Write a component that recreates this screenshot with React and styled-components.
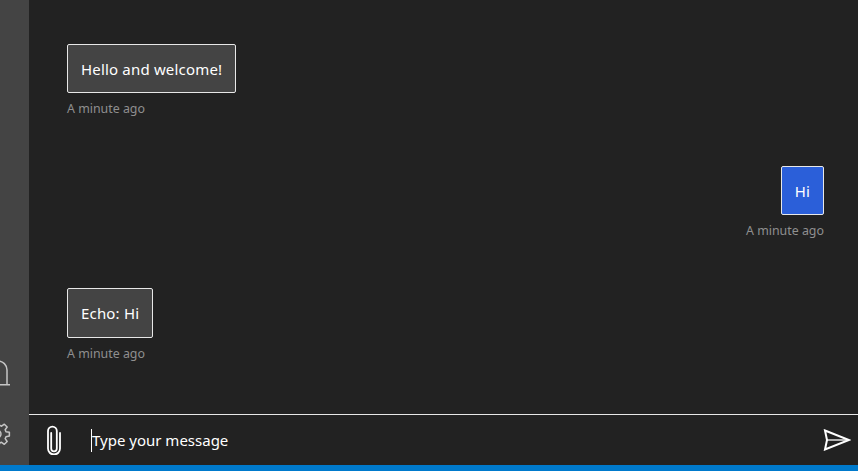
import styled, { createGlobalStyle } from "styled-components";

const GlobalStyle = createGlobalStyle`
  html, body, #root {
    margin: 0;
    height: 100%;
  }
  body {
    background: #222222;
    overflow: hidden;
    font-family: "Noto Sans", "Open Sans", sans-serif;
  }
`;

const Page = styled.div`
  display: flex;
  flex-direction: column;
  height: 471px;
`;

const Main = styled.div`
  display: flex;
  flex: 1;
  min-height: 0;
`;

const Sidebar = styled.aside`
  width: 29px;
  flex: none;
  background: #444444;
  overflow: hidden;
  display: flex;
  flex-direction: column;
  align-items: flex-end;
  justify-content: flex-end;
  gap: 32px;
  padding-bottom: 17px;
  box-sizing: border-box;
  color: #c5c5c5;
`;

const SideIcon = styled.svg`
  display: block;
  flex: none;
  width: 28px;
  height: 28px;
  margin-right: ${(p) => p.$inset}px;
`;

const Chat = styled.main`
  flex: 1;
  min-width: 0;
  display: flex;
  flex-direction: column;
  background: #222222;
`;

const History = styled.div`
  flex: 1;
  min-height: 0;
  display: flex;
  flex-direction: column;
  gap: 49px;
  padding: 44px 34px 0 38px;
`;

const Message = styled.div`
  display: flex;
  flex-direction: column;
  align-items: ${(p) => (p.$mine ? "flex-end" : "flex-start")};
`;

const Bubble = styled.div`
  box-sizing: border-box;
  height: ${(p) => p.$height}px;
  display: flex;
  align-items: center;
  padding: 0 13px;
  border: 1px solid #e8e8e8;
  border-radius: 2px;
  background: ${(p) => (p.$mine ? "#2b5fd9" : "#444444")};
  color: #ffffff;
  font-size: 15px;
  letter-spacing: 0.18px;
`;

const Timestamp = styled.div`
  margin-top: 8px;
  height: 16px;
  line-height: 16px;
  font-size: 12.4px;
  color: #8f8f8f;
`;

const InputBar = styled.form`
  flex: none;
  height: 51px;
  box-sizing: border-box;
  border-top: 1px solid #e8e8e8;
  display: flex;
  align-items: center;
  padding: 0 7px 0 17px;
`;

const IconButton = styled.button`
  flex: none;
  padding: 0;
  border: 0;
  background: none;
  color: #ffffff;
  display: flex;
`;

const MessageInput = styled.input`
  flex: 1;
  min-width: 0;
  height: 23px;
  margin: 0 16px 0 29px;
  padding: 0;
  border: 0;
  border-left: 1px solid #ffffff;
  border-radius: 0;
  outline: none;
  background: none;
  color: #ffffff;
  font-family: inherit;
  font-size: 15px;

  &::placeholder {
    color: #ffffff;
    opacity: 1;
  }
`;

const StatusBar = styled.footer`
  flex: none;
  height: 6px;
  background: #007acc;
`;

function BellIcon() {
  return (
    <SideIcon $inset={17} viewBox="0 0 28 28" fill="none" stroke="currentColor" strokeWidth="1.5">
      <path d="M0 24.75h26M23 24.75V10a9 9 0 0 0-18 0v14.75" />
    </SideIcon>
  );
}

function GearIcon() {
  return (
    <SideIcon $inset={18} viewBox="0 0 24 24" fill="none" stroke="currentColor" strokeWidth="1.3" strokeLinejoin="round">
      <path d="M10.3 2.5h3.4l.5 2.9 1.7.7 2.4-1.7 2.4 2.4-1.7 2.4.7 1.7 2.9.5v3.2l-2.9.5-.7 1.7 1.7 2.4-2.4 2.4-2.4-1.7-1.7.7-.5 2.9h-3.4l-.5-2.9-1.7-.7-2.4 1.7-2.4-2.4 1.7-2.4-.7-1.7-2.9-.5v-3.2l2.9-.5.7-1.7-1.7-2.4 2.4-2.4 2.4 1.7 1.7-.7z" transform="translate(0 -.8)" />
      <circle cx="12" cy="12" r="3.4" />
    </SideIcon>
  );
}

function AttachIcon() {
  return (
    <svg width="16" height="30" viewBox="0 0 16 30" fill="none" stroke="currentColor" strokeWidth="1.8" strokeLinecap="round">
      <path d="M5.2 8v15.5a2.8 2.8 0 0 0 5.6 0V6a4.4 4.4 0 0 0-8.8 0v17.5a6 6 0 0 0 12 0V8" />
    </svg>
  );
}

function SendIcon() {
  return (
    <svg width="28" height="22" viewBox="0 0 28 22" fill="none" stroke="currentColor" strokeWidth="2" strokeLinejoin="miter">
      <path d="M2 1.5 26 11 2 20.5 4 11z" />
      <path d="M4 11h22" strokeWidth="1.3" />
    </svg>
  );
}

export default function App() {
  return (
    <Page>
      <GlobalStyle />
      <Main>
        <Sidebar>
          <BellIcon />
          <GearIcon />
        </Sidebar>
        <Chat>
          <History>
            <Message>
              <Bubble $height={49}>Hello and welcome!</Bubble>
              <Timestamp>A minute ago</Timestamp>
            </Message>
            <Message $mine>
              <Bubble $mine $height={49}>Hi</Bubble>
              <Timestamp>A minute ago</Timestamp>
            </Message>
            <Message>
              <Bubble $height={50}>Echo: Hi</Bubble>
              <Timestamp>A minute ago</Timestamp>
            </Message>
          </History>
          <InputBar onSubmit={(e) => e.preventDefault()}>
            <IconButton type="button" aria-label="Attach file">
              <AttachIcon />
            </IconButton>
            <MessageInput placeholder="Type your message" />
            <IconButton type="submit" aria-label="Send">
              <SendIcon />
            </IconButton>
          </InputBar>
        </Chat>
      </Main>
      <StatusBar />
    </Page>
  );
}
